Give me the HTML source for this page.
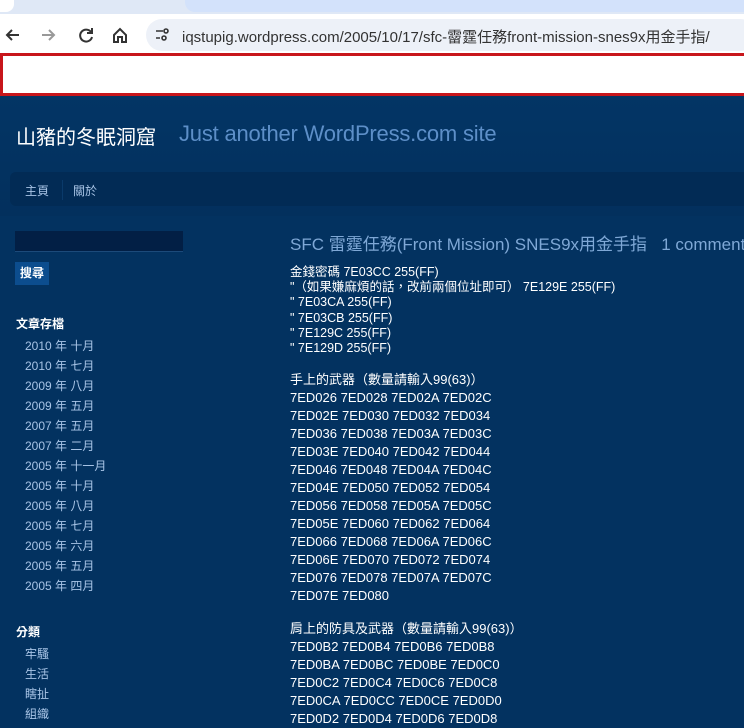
<!DOCTYPE html>
<html><head><meta charset="utf-8"><style>
*{margin:0;padding:0;box-sizing:border-box}
body{width:744px;height:716px;overflow:hidden;background:#033260;font-family:"Liberation Sans","Noto Sans CJK TC",sans-serif;color:#fff;position:relative}
.a{position:absolute;white-space:nowrap}
.tabbar{position:absolute;left:0;top:0;width:744px;height:14px;background:#dfe8f6}
.tab1{position:absolute;left:0;top:0;width:14px;height:12px;background:#fff;border-radius:0 0 8px 0}
.tab2{position:absolute;left:185px;top:0;width:559px;height:12px;background:#d3e2fb;border-radius:0 0 0 10px}
.toolbar{position:absolute;left:0;top:14px;width:744px;height:40px;background:#fff}
.url{position:absolute;left:146px;top:19px;width:610px;height:32px;background:#edf1f8;border-radius:16px}
.red{position:absolute;left:0;top:53px;width:744px;height:43px;background:#fff;border:3px solid #c8161b;border-right:none}
.hdr{position:absolute;left:0;top:96px;width:744px;height:120px;background:linear-gradient(#033565,#03305d)}
.nav{position:absolute;left:10px;top:172px;width:740px;height:34px;background:#022b55;border-radius:6px}
.code{font-size:13px;line-height:18px}
.side a{color:#a8c4e6;text-decoration:none}
</style></head><body>
<div class="tabbar"></div><div class="tab1"></div><div class="tab2"></div>
<div class="toolbar"></div>
<svg class="a" style="left:4px;top:26px" width="130" height="18" viewBox="0 0 130 18" fill="none" stroke-width="2">
<path d="M15 9H3M8 4L3 9l5 5" stroke="#333"/>
<path d="M38 9h12M45 4l5 5-5 5" stroke="#999"/>
<path d="M87 6a6 6 0 1 0 1 5M88 2v5h-5" stroke="#333"/>
<path d="M110 9l6-6 6 6v7h-4v-5h-4v5h-4z" stroke="#333"/>
</svg>
<div class="url"></div>
<svg class="a" style="left:154px;top:27px" width="16" height="16" viewBox="0 0 16 16" stroke="#333" stroke-width="1.6" fill="none"><path d="M2 4h7M2 11h4"/><circle cx="12" cy="4" r="2"/><circle cx="10" cy="11" r="2"/></svg>
<div class="a" style="left:182px;top:26px;font-size:15px;color:#333">iqstupig.wordpress.com/2005/10/17/sfc-霤霆任務front-mission-snes9x用金手指/</div>
<div class="red"></div>
<div class="hdr"></div>
<div class="a" style="left:16px;top:121px;font-size:20px;color:#fff">山豬的冬眠洞窟</div>
<div class="a" style="left:179px;top:121px;font-size:22px;color:#5d8fc8;letter-spacing:-0.2px">Just another WordPress.com site</div>
<div class="nav"></div>
<div class="a" style="left:25px;top:182px;font-size:12px;color:#a8c4e6">主頁</div>
<div class="a" style="left:62px;top:180px;width:1px;height:20px;background:#0a3a6a"></div>
<div class="a" style="left:73px;top:182px;font-size:12px;color:#a8c4e6">關於</div>
<div class="a" style="left:15px;top:231px;width:168px;height:21px;background:#021f45;border-bottom:1px solid #1c4a7a"></div>
<div class="a" style="left:15px;top:262px;width:34px;height:23px;background:#0c4d8e;font-size:12px;line-height:23px;text-align:center;font-weight:bold">搜尋</div>
<div class="side">
<div class="a" style="left:16px;top:315px;font-size:12px;font-weight:bold">文章存檔</div>
<div class="a" style="left:25px;top:336px;font-size:12px;line-height:20px"><a>2010 年 十月</a><br><a>2010 年 七月</a><br><a>2009 年 八月</a><br><a>2009 年 五月</a><br><a>2007 年 五月</a><br><a>2007 年 二月</a><br><a>2005 年 十一月</a><br><a>2005 年 十月</a><br><a>2005 年 八月</a><br><a>2005 年 七月</a><br><a>2005 年 六月</a><br><a>2005 年 五月</a><br><a>2005 年 四月</a></div>
<div class="a" style="left:16px;top:623px;font-size:12px;font-weight:bold">分類</div>
<div class="a" style="left:25px;top:644px;font-size:12px;line-height:20px"><a>牢騷</a><br><a>生活</a><br><a>瞎扯</a><br><a>組織</a></div>
</div>
<div class="a" style="left:290px;top:230px;font-size:17px;color:#7fa8d6">SFC 雷霆任務(Front Mission) SNES9x用金手指 &nbsp;&nbsp;1 comment</div>
<div class="a" style="left:290px;top:265px;font-size:12.5px;line-height:15.2px">金錢密碼 7E03CC 255(FF)<br>"（如果嫌麻煩的話，改前兩個位址即可） 7E129E 255(FF)<br>" 7E03CA 255(FF)<br>" 7E03CB 255(FF)<br>" 7E129C 255(FF)<br>" 7E129D 255(FF)</div>
<div class="a code" style="left:290px;top:371px">手上的武器（數量請輸入99(63)）<br>7ED026 7ED028 7ED02A 7ED02C<br>7ED02E 7ED030 7ED032 7ED034<br>7ED036 7ED038 7ED03A 7ED03C<br>7ED03E 7ED040 7ED042 7ED044<br>7ED046 7ED048 7ED04A 7ED04C<br>7ED04E 7ED050 7ED052 7ED054<br>7ED056 7ED058 7ED05A 7ED05C<br>7ED05E 7ED060 7ED062 7ED064<br>7ED066 7ED068 7ED06A 7ED06C<br>7ED06E 7ED070 7ED072 7ED074<br>7ED076 7ED078 7ED07A 7ED07C<br>7ED07E 7ED080</div>
<div class="a code" style="left:290px;top:620px">肩上的防具及武器（數量請輸入99(63)）<br>7ED0B2 7ED0B4 7ED0B6 7ED0B8<br>7ED0BA 7ED0BC 7ED0BE 7ED0C0<br>7ED0C2 7ED0C4 7ED0C6 7ED0C8<br>7ED0CA 7ED0CC 7ED0CE 7ED0D0<br>7ED0D2 7ED0D4 7ED0D6 7ED0D8</div>
</body></html>
